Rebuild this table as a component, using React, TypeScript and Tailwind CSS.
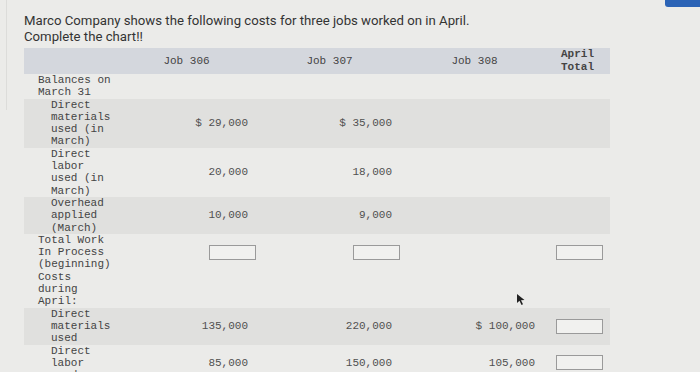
import React from 'react';

type Cell = string | 'box' | null;

interface Row {
  lines: string[];
  sub: boolean;
  shade: boolean;
  cells: Cell[];
}

const rows: Row[] = [
  { lines: ['Balances on', 'March 31'], sub: false, shade: false, cells: [null, null, null, null] },
  { lines: ['Direct', 'materials', 'used (in', 'March)'], sub: true, shade: true, cells: ['$ 29,000', '$ 35,000', null, null] },
  { lines: ['Direct', 'labor', 'used (in', 'March)'], sub: true, shade: false, cells: ['20,000', '18,000', null, null] },
  { lines: ['Overhead', 'applied', '(March)'], sub: true, shade: true, cells: ['10,000', '9,000', null, null] },
  { lines: ['Total Work', 'In Process', '(beginning)'], sub: false, shade: false, cells: ['box', 'box', null, 'box'] },
  { lines: ['Costs', 'during', 'April:'], sub: false, shade: false, cells: [null, null, null, null] },
  { lines: ['Direct', 'materials', 'used'], sub: true, shade: true, cells: ['135,000', '220,000', '$ 100,000', 'box'] },
  { lines: ['Direct', 'labor', 'used'], sub: true, shade: false, cells: ['85,000', '150,000', '105,000', 'box'] },
];

function InputBox() {
  return <div className="h-[15px] w-[47px] border border-[#9a9a9a] bg-[#f1f1ef]" />;
}

function Cursor() {
  return (
    <svg className="absolute left-[516px] top-[293px]" width="10" height="13" viewBox="0 0 10 13">
      <path d="M1 1 L1 10 L3.5 7.8 L5.5 12 L7 11.3 L5 7.2 L8.5 7 Z" fill="#222" />
    </svg>
  );
}

export default function App() {
  return (
    <div className="relative h-[372px] w-[700px] overflow-hidden bg-[#ebebe9]">
      {/* blue button peeking in at the top right */}
      <div className="absolute right-0 top-0 h-[7px] w-[35px] rounded-bl-[3px] bg-[#2b63b6]" />
      <div className="absolute left-[6px] top-0 h-[110px] w-px bg-[#dcdcda]" />

      <div className="pl-6 pt-[13px]">
        <p className="text-[13.2px] leading-[16px] text-[#333] font-['Roboto',sans-serif]">
          Marco Company shows the following costs for three jobs worked on in April.
          <br />
          Complete the chart!!
        </p>

        <div className="mt-[3px] w-[586px] font-['Liberation_Mono',monospace] text-[11px] leading-[12.3px] text-[#444]">
          {/* header */}
          <div className="grid h-[26px] grid-cols-[88px_145px_145px_145px_63px] items-center bg-[#d4d7dd]">
            <div />
            <div className="pl-[4px] text-center">Job 306</div>
            <div className="text-center">Job 307</div>
            <div className="text-center">Job 308</div>
            <div className="pr-[2px] text-center font-bold leading-[13px]">
              April
              <br />
              Total
            </div>
          </div>

          {rows.map((row, i) => (
            <div
              key={i}
              className={`grid grid-cols-[88px_145px_145px_145px_63px] items-center ${row.shade ? 'bg-[#e0e0de]' : ''}`}
            >
              <div className={row.sub ? 'pl-[27px]' : 'pl-[14px]'}>
                {row.lines.map((l, j) => (
                  <div key={j} className="whitespace-pre">{l}</div>
                ))}
              </div>
              {row.cells.map((c, k) => (
                <div
                  key={k}
                  className={`flex ${k === 3 ? 'justify-center pl-[2px]' : 'justify-end'} ${k === 0 ? 'pr-[9px]' : k === 1 ? 'pr-[10px]' : k === 2 ? 'pr-[12px]' : ''} text-[#505050]`}
                >
                  {c === 'box' ? <div className={k === 3 ? '' : '-mr-[8px]'}><InputBox /></div> : c}
                </div>
              ))}
            </div>
          ))}
        </div>
      </div>

      <Cursor />
    </div>
  );
}
